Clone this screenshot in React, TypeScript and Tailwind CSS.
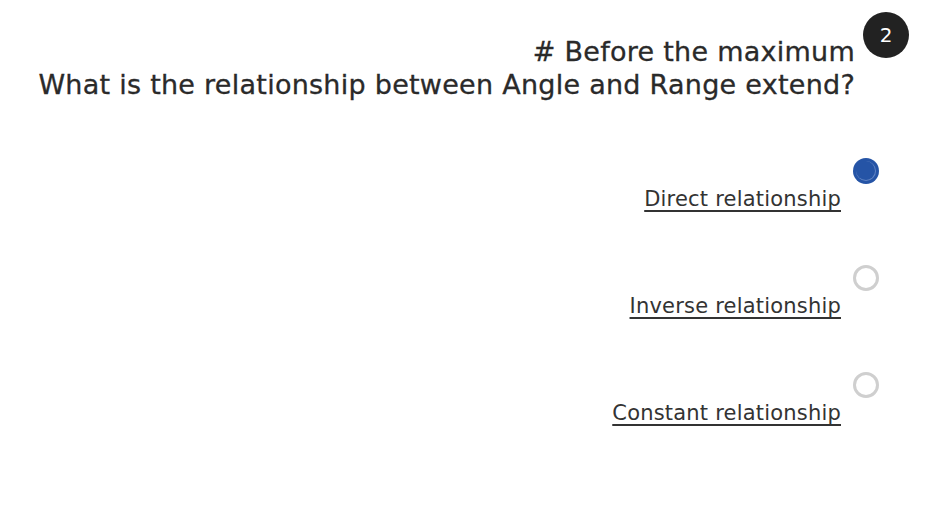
import React, { useState } from "react";

const options = [
  "Direct relationship",
  "Inverse relationship",
  "Constant relationship",
];

const Radio: React.FC<{ checked: boolean }> = ({ checked }) =>
  checked ? (
    <span className="relative block w-[26px] h-[26px] rounded-full bg-[#2554a6]">
      <span className="absolute inset-[3px] rounded-full border-r-[1.5px] border-b border-[#8aa6d8]/60" />
    </span>
  ) : (
    <span className="block w-[26px] h-[26px] rounded-full border-[3px] border-[#cfcfcf] bg-white" />
  );

export default function App() {
  const [selected, setSelected] = useState(0);

  return (
    <div
      className="relative w-[942px] h-[525px] bg-white text-[#2a2a2a]"
      style={{ fontFamily: '"DejaVu Sans", "Open Sans", sans-serif' }}
    >
      <div className="absolute top-[12px] right-[33px] w-[46px] h-[46px] rounded-full bg-[#222222] flex items-center justify-center text-white text-[20px]">
        2
      </div>

      <div className="pt-[35px] pr-[87px] text-right">
        <h1 className="text-[27px] leading-[33px] tracking-[0.26px] [-webkit-text-stroke:0.3px_#2a2a2a]">
          # Before the maximum
          <br />
          What is the relationship between Angle and Range extend?
        </h1>
      </div>

      <div className="mt-[57px] pr-[63px] flex flex-col items-end gap-[53px]">
        {options.map((label, i) => (
          <button
            key={label}
            onClick={() => setSelected(i)}
            className="flex flex-col items-end"
          >
            <Radio checked={selected === i} />
            <span className="mr-[38px] mt-[2px] text-[21px] leading-[26px] tracking-[0.2px] underline underline-offset-[4px] decoration-[1.5px] text-[#333]">
              {label}
            </span>
          </button>
        ))}
      </div>
    </div>
  );
}
